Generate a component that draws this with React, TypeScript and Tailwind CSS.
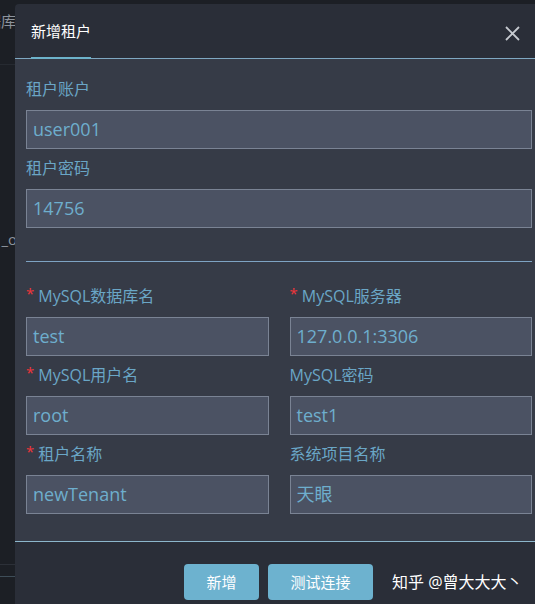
import React from 'react';

const font = { fontFamily: '"Open Sans", "Noto Sans CJK SC", sans-serif' };

type FieldProps = { label: string; value: string; required?: boolean };

const Field = ({ label, value, required }: FieldProps) => (
  <div className="flex flex-col">
    <div className="h-10 flex items-center pb-[3px] text-[16px] text-[#6aa6c6] leading-none">
      {required && <span className="text-[#f0353a] mr-[4px] -mt-[4px] text-[15px]">*</span>}
      <span>{label}</span>
    </div>
    <div className="h-[39px] border border-[#7a8394] bg-[#4b5263] flex items-center px-[6px] text-[18px] text-[#6eaecd]">
      {value}
    </div>
  </div>
);

const App = () => {
  return (
    <div className="relative w-[535px] h-[604px] bg-[#1c1f25] overflow-hidden" style={font}>
      {/* page behind the dialog */}
      <div className="absolute left-0 top-0 w-[15px] h-full">
        <div className="absolute right-[-16px] top-[10px] text-[15px] text-[#8d939c] whitespace-nowrap">数据库名</div>
        <div className="absolute left-0 right-0 top-[64px] h-px bg-[#262a31]" />
        <div className="absolute right-[-2px] top-[228px] text-[15px] text-[#8d939c] whitespace-nowrap">_o</div>
        <div className="absolute left-0 right-0 top-[564px] h-px bg-[#2c3038]" />
        <div className="absolute left-0 right-0 top-[576px] h-px bg-[#3e4d58]" />
      </div>

      {/* dialog */}
      <div className="absolute left-[15px] top-[4px] w-[528px] rounded-t-[4px] overflow-hidden flex flex-col">
        <div className="relative h-[55px] bg-[#2a2e38] border-b border-[#7fa8c2] flex items-center px-4">
          <div className="relative h-full flex items-center text-[15px] text-white">
            新增租户
            <div className="absolute left-0 right-0 bottom-[-1px] h-[2px] bg-[#6db3cb]" />
          </div>
          <svg
            className="absolute right-[23px] top-[22px]"
            width="15"
            height="15"
            viewBox="0 0 15 15"
            fill="none"
            stroke="#c6cad0"
            strokeWidth="1.8"
          >
            <path d="M1 1 L14 14 M14 1 L1 14" />
          </svg>
        </div>

        <div className="bg-[#363b47] px-[11px] pt-[11px] pb-[27px] flex flex-col">
          <Field label="租户账户" value="user001" />
          <Field label="租户密码" value="14756" />
          <div className="mt-[33px] h-px bg-[#7ea3c3]" />
          <div className="mt-[15px] grid grid-cols-2 gap-x-[21px]">
            <Field label="MySQL数据库名" value="test" required />
            <Field label="MySQL服务器" value="127.0.0.1:3306" required />
            <Field label="MySQL用户名" value="root" required />
            <Field label="MySQL密码" value="test1" />
            <Field label="租户名称" value="newTenant" required />
            <Field label="系统项目名称" value="天眼" />
          </div>
        </div>

        <div className="bg-[#2a2e38] border-t border-[#8cb6cb] h-[70px] flex items-start pt-[22px] pl-[169px] gap-[9px]">
          <button className="w-[75px] h-[36px] rounded-[4px] bg-[#6db2cf] text-white text-[15px]">新增</button>
          <button className="w-[105px] h-[36px] rounded-[4px] bg-[#6db2cf] text-white text-[15px]">测试连接</button>
          <div className="ml-[10px] h-[36px] flex items-center text-white text-[16px] whitespace-nowrap">知乎 @曾大大大丶</div>
        </div>
      </div>
    </div>
  );
};

export default App;
